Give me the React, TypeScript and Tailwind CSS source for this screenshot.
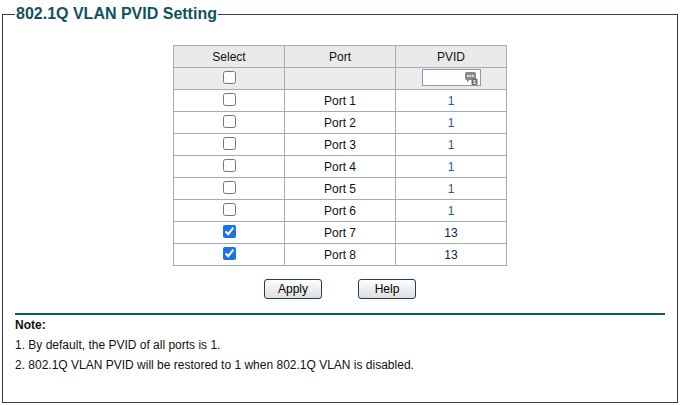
import React from 'react';

const ports = [
  { name: 'Port 1', pvid: 1, checked: false },
  { name: 'Port 2', pvid: 1, checked: false },
  { name: 'Port 3', pvid: 1, checked: false },
  { name: 'Port 4', pvid: 1, checked: false },
  { name: 'Port 5', pvid: 1, checked: false },
  { name: 'Port 6', pvid: 1, checked: false },
  { name: 'Port 7', pvid: 13, checked: true },
  { name: 'Port 8', pvid: 13, checked: true },
];

const cell = 'border border-[#aaaaaa] h-[22px] p-0 text-center align-middle';

const Check: React.FC<{ checked?: boolean }> = ({ checked }) => (
  <input
    type="checkbox"
    defaultChecked={checked}
    className="w-[13px] h-[13px] align-middle -mt-[3px] accent-[#1a73e8]"
  />
);

// little autofill badge sitting in the right end of the input
const FillIcon = () => (
  <svg width="14" height="14" viewBox="0 0 14 14" className="absolute right-[2px] top-[1px]">
    <path d="M1 2.5a1.5 1.5 0 0 1 1.5-1.5h8a1.5 1.5 0 0 1 1.5 1.5v5a1.5 1.5 0 0 1-1.5 1.5h-5l-2.5 2.5v-2.5h-0.5a1.5 1.5 0 0 1-1.5-1.5z" fill="#8a8a8a" />
    <circle cx="4" cy="5" r="0.9" fill="#fff" />
    <circle cx="6.5" cy="5" r="0.9" fill="#fff" />
    <circle cx="9" cy="5" r="0.9" fill="#fff" />
    <rect x="7.5" y="7.5" width="6" height="6.5" rx="1" fill="#6f6f6f" />
    <text x="10.5" y="13" textAnchor="middle" fontSize="6" fontWeight="bold" fill="#fff" fontFamily="Liberation Sans, Arial, sans-serif">1</text>
  </svg>
);

const Button: React.FC<{ label: string }> = ({ label }) => (
  <button
    type="button"
    className="w-[58px] h-[20px] border border-[#1c3d5c] rounded-[3px] bg-gradient-to-b from-[#ffffff] to-[#dedede] text-[12px] text-black leading-none"
  >
    {label}
  </button>
);

export default function App() {
  return (
    <div className="w-[682px] h-[405px] bg-white pt-[4px] font-['Liberation_Sans',Arial,sans-serif] text-[12px] text-[#111]">
      <fieldset className="ml-[2px] w-[676px] h-[399px] border border-[#333c40] px-[12px]">
        <legend className="px-[1px] text-[16px] leading-[20px] font-bold text-[#10525c]">
          802.1Q VLAN PVID Setting
        </legend>

        <table className="mx-auto mt-[21px] border-collapse w-[334px] table-fixed">
          <thead>
            <tr className="bg-[#e9e9e9]">
              <td className={`${cell} w-[111px]`}>Select</td>
              <td className={`${cell} w-[111px]`}>Port</td>
              <td className={`${cell} w-[111px]`}>PVID</td>
            </tr>
            <tr className="bg-[#ebebeb]">
              <td className={cell}>
                <Check />
              </td>
              <td className={cell}></td>
              <td className={cell}>
                <div className="relative inline-block w-[59px] h-[17px] -mt-[3px] align-middle border border-[#7f9db9] bg-white">
                  <FillIcon />
                </div>
              </td>
            </tr>
          </thead>
          <tbody>
            {ports.map((p) => (
              <tr key={p.name}>
                <td className={cell}>
                  <Check checked={p.checked} />
                </td>
                <td className={cell}>{p.name}</td>
                <td className={`${cell} ${p.pvid === 1 ? 'text-[#1e5a9c]' : 'text-[#14204a]'}`}>{p.pvid}</td>
              </tr>
            ))}
          </tbody>
        </table>

        <div className="flex justify-center gap-[36px] mt-[13px]">
          <Button label="Apply" />
          <Button label="Help" />
        </div>

        <div className="mt-[14px] h-[2px] w-[650px] bg-[#0e5a60]" />

        <div className="leading-[20px]">
          <div className="font-bold">Note:</div>
          <div>1. By default, the PVID of all ports is 1.</div>
          <div>2. 802.1Q VLAN PVID will be restored to 1 when 802.1Q VLAN is disabled.</div>
        </div>
      </fieldset>
    </div>
  );
}
